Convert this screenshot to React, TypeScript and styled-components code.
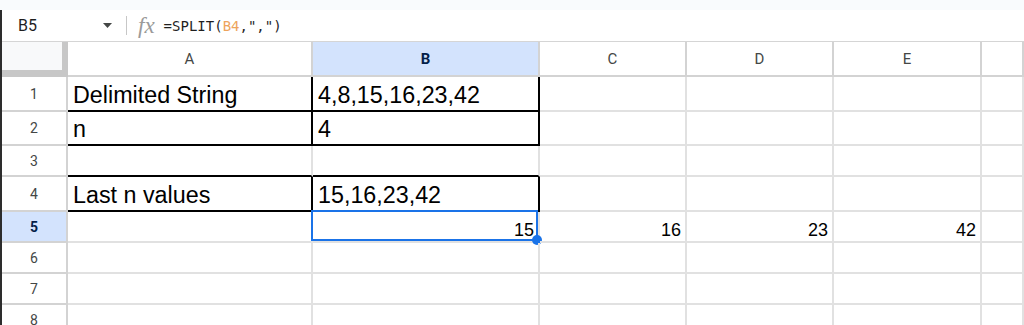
import React from "react";
import styled, { createGlobalStyle, css } from "styled-components";

const Global = createGlobalStyle`
  html, body { margin: 0; padding: 0; background: #ffffff; }
  body { width: 1024px; height: 325px; overflow: hidden; font-family: "Liberation Sans", Arial, sans-serif; }
`;

const Page = styled.div`
  width: 1024px;
  height: 325px;
  overflow: hidden;
  display: flex;
  flex-direction: column;
  background: #ffffff;
`;

const TopBand = styled.div`
  height: 10px;
  flex: none;
  background: #f9fbfd;
`;

const Main = styled.div`
  flex: 1;
  display: flex;
  flex-direction: column;
  border-left: 2px solid #2d2d2d;
  min-height: 0;
`;

const FormulaBar = styled.div`
  height: 31px;
  flex: none;
  display: flex;
  align-items: center;
  border-bottom: 1px solid #d5d5d5;
  background: #ffffff;
`;

const NameBox = styled.div`
  width: 114px;
  box-sizing: border-box;
  padding: 0 4px 0 16px;
  display: flex;
  align-items: center;
  justify-content: space-between;
  font-family: Roboto, "Liberation Sans", Arial, sans-serif;
  font-size: 16px;
  color: #1f1f1f;
`;

const Divider = styled.div`
  width: 1px;
  height: 19px;
  background: #c7c7c7;
  margin: 0 11px 0 10px;
`;

const Fx = styled.span`
  font-family: "Liberation Serif", "DejaVu Serif", serif;
  font-style: italic;
  font-size: 23px;
  line-height: 1;
  color: #9a9a9a;
  margin-right: 9px;
`;

const Formula = styled.span`
  font-family: "DejaVu Sans Mono", "Liberation Mono", monospace;
  font-size: 14px;
  color: #1f1f1f;
`;

const RangeRef = styled.span`
  color: #eda45c;
`;

const Grid = styled.div`
  display: grid;
  grid-template-columns: 66px 245px 227px 147px 147px 148px 1fr;
`;

type Edge = "grid" | "black" | "head" | "freeze";

const edgeCss = (e: Edge | undefined) => {
  switch (e) {
    case "black":
      return "2px solid #000000";
    case "head":
      return "2px solid #d3d3d3";
    case "freeze":
      return "6px solid #c7c7c7";
    default:
      return "2px solid #e1e1e1";
  }
};

const Corner = styled.div`
  box-sizing: border-box;
  height: 35px;
  background: #f8f9fa;
  border-right: ${edgeCss("freeze")};
  border-bottom: 7px solid #c7c7c7;
`;

const ColHead = styled.div<{ $active?: boolean }>`
  box-sizing: border-box;
  height: 35px;
  display: flex;
  align-items: center;
  justify-content: center;
  border-right: ${edgeCss("head")};
  border-bottom: ${edgeCss("head")};
  font-family: Roboto, "Liberation Sans", Arial, sans-serif;
  font-size: 15px;
  color: #444746;
  background: #ffffff;
  ${(p) =>
    p.$active &&
    css`
      background: #d3e3fd;
      color: #041e49;
      font-weight: 700;
    `}
`;

const RowHead = styled.div<{ $h: number; $active?: boolean }>`
  box-sizing: border-box;
  height: ${(p) => p.$h}px;
  display: flex;
  align-items: center;
  justify-content: center;
  border-right: ${edgeCss("head")};
  border-bottom: ${edgeCss("head")};
  font-family: Roboto, "Liberation Sans", Arial, sans-serif;
  font-size: 14px;
  color: #444746;
  background: #ffffff;
  ${(p) =>
    p.$active &&
    css`
      background: #d3e3fd;
      color: #041e49;
      font-weight: 700;
    `}
`;

const Cell = styled.div<{ $h: number; $r?: Edge; $b?: Edge; $align?: "left" | "right"; $big?: boolean }>`
  box-sizing: border-box;
  position: relative;
  height: ${(p) => p.$h}px;
  display: flex;
  align-items: flex-end;
  justify-content: ${(p) => (p.$align === "right" ? "flex-end" : "flex-start")};
  padding: ${(p) => (p.$big ? "0 5px 1px 5px" : "0 4px 0 4px")};
  border-right: ${(p) => edgeCss(p.$r)};
  border-bottom: ${(p) => edgeCss(p.$b)};
  font-family: "Liberation Sans", Arial, sans-serif;
  font-size: ${(p) => (p.$big ? 23.3 : 18)}px;
  line-height: 1.1;
  color: #000000;
  white-space: nowrap;
`;

const Selection = styled.div`
  position: absolute;
  top: -2px;
  left: -2px;
  right: 0;
  bottom: 0;
  border: 2px solid #1a73e8;
  pointer-events: none;
`;

const Handle = styled.div`
  position: absolute;
  right: -6px;
  bottom: -6px;
  width: 10px;
  height: 10px;
  border-radius: 50%;
  background: #1a73e8;
`;

type CellDef = { text?: string; r?: Edge; b?: Edge; align?: "left" | "right"; big?: boolean; selected?: boolean };
type RowDef = { n: number; h: number; active?: boolean; cells: CellDef[] };

const cols = ["A", "B", "C", "D", "E", ""];

const empty = (): CellDef[] => cols.map(() => ({}));

const rows: RowDef[] = [
  {
    n: 1,
    h: 35,
    cells: [
      { text: "Delimited String", r: "black", b: "black", big: true },
      { text: "4,8,15,16,23,42", r: "black", b: "black", big: true },
      {}, {}, {}, {},
    ],
  },
  {
    n: 2,
    h: 34,
    cells: [
      { text: "n", r: "black", b: "black", big: true },
      { text: "4", r: "black", b: "black", big: true },
      {}, {}, {}, {},
    ],
  },
  {
    n: 3,
    h: 31,
    cells: [{ b: "black" }, { b: "black" }, {}, {}, {}, {}],
  },
  {
    n: 4,
    h: 35,
    cells: [
      { text: "Last n values", r: "black", b: "black", big: true },
      { text: "15,16,23,42", r: "black", b: "black", big: true },
      {}, {}, {}, {},
    ],
  },
  {
    n: 5,
    h: 31,
    active: true,
    cells: [
      {},
      { text: "15", align: "right", selected: true },
      { text: "16", align: "right" },
      { text: "23", align: "right" },
      { text: "42", align: "right" },
      {},
    ],
  },
  { n: 6, h: 31, cells: empty() },
  { n: 7, h: 31, cells: empty() },
  { n: 8, h: 31, cells: empty() },
];

const Caret = () => (
  <svg width="9" height="5" viewBox="0 0 9 5" aria-hidden="true">
    <polygon points="0,0 9,0 4.5,5" fill="#444746" />
  </svg>
);

export default function App() {
  return (
    <Page>
      <Global />
      <TopBand />
      <Main>
        <FormulaBar>
          <NameBox>
            <span>B5</span>
            <Caret />
          </NameBox>
          <Divider />
          <Fx>fx</Fx>
          <Formula>
            =SPLIT(<RangeRef>B4</RangeRef>,",")
          </Formula>
        </FormulaBar>
        <Grid>
          <Corner />
          {cols.map((c) => (
            <ColHead key={"h" + c} $active={c === "B"}>
              {c}
            </ColHead>
          ))}
          {rows.map((row) => (
            <React.Fragment key={row.n}>
              <RowHead $h={row.h} $active={row.active}>
                {row.n}
              </RowHead>
              {row.cells.map((cell, i) => (
                <Cell
                  key={i}
                  $h={row.h}
                  $r={cell.r}
                  $b={cell.b}
                  $align={cell.align}
                  $big={cell.big}
                >
                  {cell.text}
                  {cell.selected && (
                    <Selection>
                      <Handle />
                    </Selection>
                  )}
                </Cell>
              ))}
            </React.Fragment>
          ))}
        </Grid>
      </Main>
    </Page>
  );
}
